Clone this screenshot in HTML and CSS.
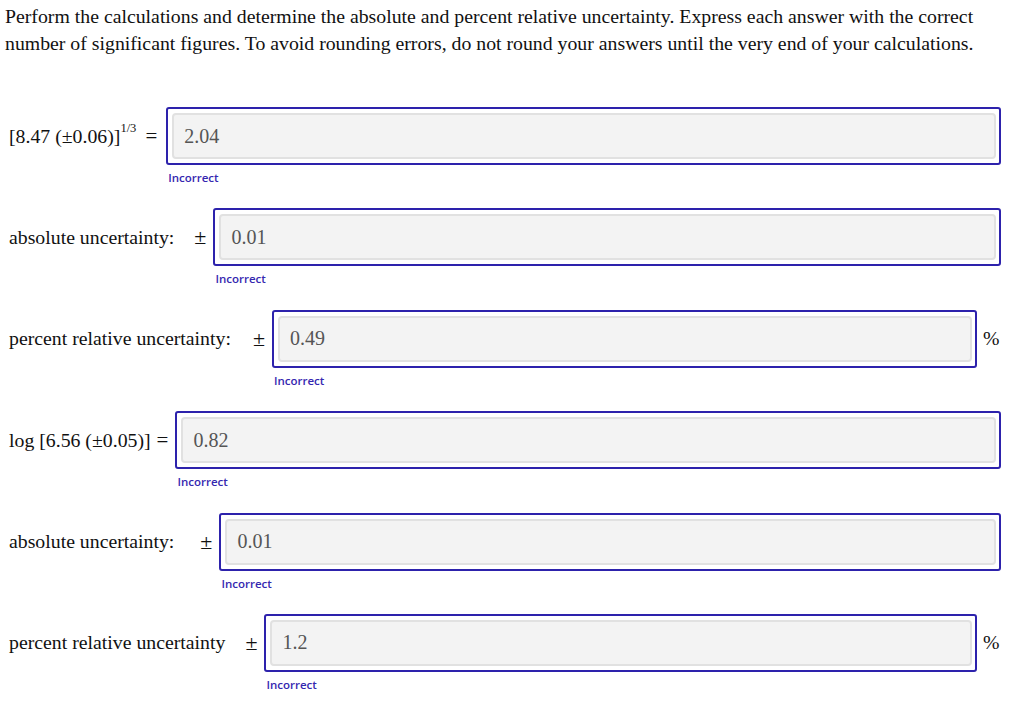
FILE: index.html
```html
<!DOCTYPE html>
<html>
<head>
<meta charset="utf-8">
<link rel="stylesheet" href="styles.css">
</head>
<body>
<div class="page">
  <p class="intro">Perform the calculations and determine the absolute and percent relative uncertainty. Express each answer with the correct number of significant figures. To avoid rounding errors, do not round your answers until the very end of your calculations.</p>

  <div class="q q1">
    <div class="label"><span>[8.47 (±0.06)]<sup>1/3</sup></span><span class="eq">=</span></div>
    <div class="field">
      <div class="boxrow"><div class="box"><div class="input">2.04</div></div></div>
      <div class="status">Incorrect</div>
    </div>
  </div>

  <div class="q q2">
    <div class="label"><span>absolute uncertainty:</span><span class="pm">±</span></div>
    <div class="field">
      <div class="boxrow"><div class="box"><div class="input">0.01</div></div></div>
      <div class="status">Incorrect</div>
    </div>
  </div>

  <div class="q q3">
    <div class="label"><span>percent relative uncertainty:</span><span class="pm">±</span></div>
    <div class="field">
      <div class="boxrow"><div class="box"><div class="input">0.49</div></div><span class="unit">%</span></div>
      <div class="status">Incorrect</div>
    </div>
  </div>

  <div class="q q4">
    <div class="label"><span>log [6.56 (±0.05)]</span><span class="eq">=</span></div>
    <div class="field">
      <div class="boxrow"><div class="box"><div class="input">0.82</div></div></div>
      <div class="status">Incorrect</div>
    </div>
  </div>

  <div class="q q5">
    <div class="label"><span>absolute uncertainty:</span><span class="pm">±</span></div>
    <div class="field">
      <div class="boxrow"><div class="box"><div class="input">0.01</div></div></div>
      <div class="status">Incorrect</div>
    </div>
  </div>

  <div class="q q6">
    <div class="label"><span>percent relative uncertainty</span><span class="pm">±</span></div>
    <div class="field">
      <div class="boxrow"><div class="box"><div class="input">1.2</div></div><span class="unit">%</span></div>
      <div class="status">Incorrect</div>
    </div>
  </div>
</div>
</body>
</html>
```

FILE: styles.css
```css
html, body {
  margin: 0;
  padding: 0;
  background: #ffffff;
}
.page {
  padding: 3px 23px 0 5px;
  font-family: "Liberation Serif", "Times New Roman", serif;
  color: #111;
  font-size: 19.8px;
}
.intro {
  margin: 0;
  line-height: 27px;
  font-size: 19.8px;
}
.q {
  display: flex;
  align-items: flex-start;
  padding-left: 4px;
  margin-bottom: 22.4px;
}
.q1 {
  margin-top: 50px;
}
.label {
  height: 58px;
  display: flex;
  align-items: center;
  white-space: nowrap;
  font-size: 19.8px;
}
.label sup {
  font-size: 12.5px;
  position: relative;
  top: -3px;
}
.eq {
  margin-left: 9px;
  margin-right: 9px;
  font-size: 21px;
}
.q4 .eq {
  margin-left: 6px;
  margin-right: 7px;
}
.pm {
  margin-right: 7px;
  font-size: 22px;
}
.q2 .pm { margin-left: 20px; }
.q3 .pm { margin-left: 22px; }
.q5 .pm { margin-left: 26px; }
.q6 .pm { margin-left: 20px; }
.field {
  flex: 1;
  display: flex;
  flex-direction: column;
  min-width: 0;
}
.boxrow {
  display: flex;
  align-items: center;
}
.box {
  flex: 1;
  height: 58px;
  box-sizing: border-box;
  border: 2px solid #2d22ac;
  border-radius: 3px;
  padding: 4px 3px 4px 4px;
  display: flex;
}
.input {
  flex: 1;
  box-sizing: border-box;
  background: #f3f3f3;
  border: 2px solid #e1e1e1;
  border-radius: 4px;
  padding: 0 10px;
  display: flex;
  align-items: center;
  font-size: 20px;
  color: #555;
}
.unit {
  width: 24px;
  padding-left: 6px;
  box-sizing: border-box;
  font-size: 19.8px;
}
.status {
  margin-top: 5px;
  margin-left: 2px;
  font-family: "Open Sans", "Noto Sans", sans-serif;
  font-weight: 600;
  font-size: 11.5px;
  line-height: 16px;
  color: #3527b0;
}
```
